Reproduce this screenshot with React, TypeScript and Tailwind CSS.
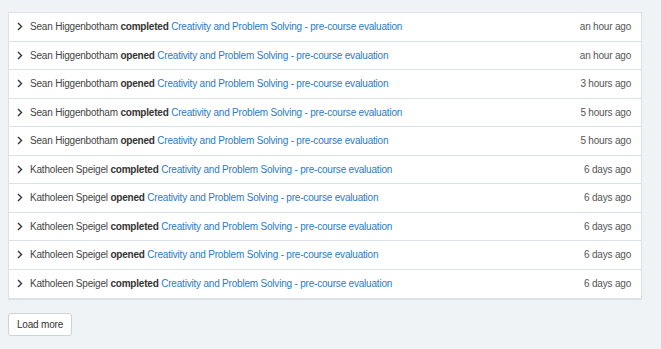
import React from "react";

type Item = { name: string; action: "completed" | "opened"; time: string };

const items: Item[] = [
  { name: "Sean Higgenbotham", action: "completed", time: "an hour ago" },
  { name: "Sean Higgenbotham", action: "opened", time: "an hour ago" },
  { name: "Sean Higgenbotham", action: "opened", time: "3 hours ago" },
  { name: "Sean Higgenbotham", action: "completed", time: "5 hours ago" },
  { name: "Sean Higgenbotham", action: "opened", time: "5 hours ago" },
  { name: "Katholeen Speigel", action: "completed", time: "6 days ago" },
  { name: "Katholeen Speigel", action: "opened", time: "6 days ago" },
  { name: "Katholeen Speigel", action: "completed", time: "6 days ago" },
  { name: "Katholeen Speigel", action: "opened", time: "6 days ago" },
  { name: "Katholeen Speigel", action: "completed", time: "6 days ago" },
];

function Chevron() {
  return (
    <svg width="6" height="9" viewBox="0 0 6 9" className="flex-shrink-0">
      <path d="M1 1l3.5 3.5L1 8" fill="none" stroke="#333" strokeWidth="1.4" />
    </svg>
  );
}

export default function App() {
  return (
    <div
      className="min-h-[349px] bg-[#f0f3f6] pt-[12px] pl-[8px] pr-[19px] text-[10px] tracking-[-0.2px] text-[#444]"
      style={{ fontFamily: '"Liberation Sans", Arial, sans-serif' }}
    >
      <ul className="bg-white border border-[#dbe1e7] border-b-2">
        {items.map((it, i) => (
          <li
            key={i}
            className="flex items-center h-[28.5px] pl-[8px] pr-[10px] border-b border-[#dbe1e7] last:border-b-0"
          >
            <Chevron />
            <span className="ml-[7px] flex-1">
              {it.name} <b className="font-bold text-[#333]">{it.action}</b>{" "}
              <a className="text-[#2a7ac6]">Creativity and Problem Solving - pre-course evaluation</a>
            </span>
            <span className="text-[#555]">{it.time}</span>
          </li>
        ))}
      </ul>
      <button className="mt-[13px] h-[23px] px-[8px] bg-white border border-[#ccd2d8] rounded-[3px] text-[10px] text-[#333]">
        Load more
      </button>
    </div>
  );
}
